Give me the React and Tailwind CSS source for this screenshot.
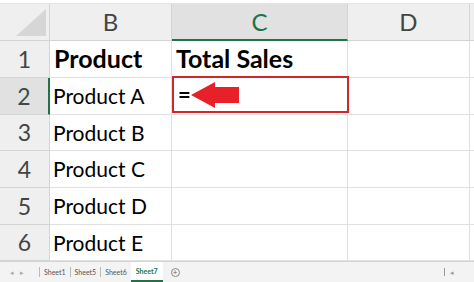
import React from "react";

const rows = [
  { n: 1, b: "Product", c: "Total Sales", bold: true },
  { n: 2, b: "Product A", selected: true },
  { n: 3, b: "Product B" },
  { n: 4, b: "Product C" },
  { n: 5, b: "Product D" },
  { n: 6, b: "Product E" },
];

const heights = ["h-[37px]", "h-[37px]", "h-[36px]", "h-[37px]", "h-[37px]", "h-[36px]"];

const App = () => {
  return (
    <div className="w-[474px] h-[282px] overflow-hidden bg-white font-['Lato','Open_Sans',sans-serif] text-black">
      {/* strip above the headers */}
      <div className="h-[4px] border-b border-[#e3e3e3]" />

      {/* column headers */}
      <div className="flex h-[37px] bg-[#efefef] text-[#444] text-[24px]">
        <div className="w-[50px] border-r border-b border-[#d4d4d4] flex items-end justify-end pr-[2px] pb-[3px]">
          <svg width="32" height="28" viewBox="0 0 32 28">
            <polygon points="31,0 31,27 1,27" fill="#d6d6d6" />
          </svg>
        </div>
        <div className="w-[122px] border-r border-b border-[#d4d4d4] flex items-center justify-center">B</div>
        <div className="w-[176px] bg-[#e1e1e1] border-r border-[#d4d4d4] border-b-2 border-b-[#217346] flex items-center justify-center text-[#217346]">C</div>
        <div className="w-[122px] border-r border-b border-[#d4d4d4] flex items-center justify-center">D</div>
        <div className="flex-1 border-b border-[#d4d4d4]" />
      </div>

      {/* data rows */}
      {rows.map((r, i) => (
        <div key={r.n} className={`flex ${heights[i]}`}>
          <div
            className={
              r.selected
                ? "w-[50px] bg-[#e1e1e1] border-r-2 border-r-[#217346] border-b border-[#d4d4d4] flex items-center justify-center text-[23px] text-[#3f4a44]"
                : "w-[50px] bg-[#efefef] border-r border-b border-[#d4d4d4] flex items-center justify-center text-[23px] text-[#444]"
            }
          >
            {r.n}
          </div>
          <div className={`w-[122px] border-r border-b border-[#e1e1e1] flex items-center pl-[3px] ${r.bold ? "font-bold text-[25px] pl-[4px]" : "text-[21px]"}`}>
            {r.b}
          </div>
          <div className="w-[176px] border-r border-b border-[#e1e1e1] relative flex items-center pl-[4px] text-[25px] font-bold">
            {r.c}
            {r.selected && (
              <div className="absolute left-[0px] top-[-2px] w-[177px] h-[37px] border-2 border-[#d0262c] flex items-center pl-[4px]">
                <span className="text-[22px] font-bold leading-none">=</span>
                <svg width="50" height="26" viewBox="0 0 50 26" className="ml-[-1px]">
                  <polygon points="1,13 25,0 25,5 49,5 49,21 25,21 25,26" fill="#e8202a" />
                </svg>
              </div>
            )}
          </div>
          <div className="w-[122px] border-r border-b border-[#e1e1e1]" />
          <div className="flex-1 border-b border-[#e1e1e1]" />
        </div>
      ))}

      {/* sheet tabs */}
      <div className="flex items-center h-[21px] bg-[#f3f3f3] border-t border-[#d4d4d4] text-[7px] text-[#555]">
        <div className="w-[39px] flex items-center gap-[6px] pl-[10px] text-[#aaa]">
          <span>◂</span>
          <span>▸</span>
        </div>
        <div className="h-[10px] border-l border-[#bbb]" />
        <div className="px-[4px]">Sheet1</div>
        <div className="h-[10px] border-l border-[#bbb]" />
        <div className="px-[4px]">Sheet5</div>
        <div className="h-[10px] border-l border-[#bbb]" />
        <div className="px-[4px]">Sheet6</div>
        <div className="h-full bg-white border-b-2 border-[#217346] flex items-center px-[5px] font-bold text-[#217346]">Sheet7</div>
        <div className="ml-[8px] w-[9px] h-[9px] rounded-full border border-[#888] flex items-center justify-center text-[8px] leading-none text-[#666]">+</div>
        <div className="ml-auto mr-[20px] flex items-center gap-[5px] text-[#999]">
          <div className="h-[8px] border-l border-[#999]" />
          <span>◂</span>
        </div>
      </div>
    </div>
  );
};

export default App;
